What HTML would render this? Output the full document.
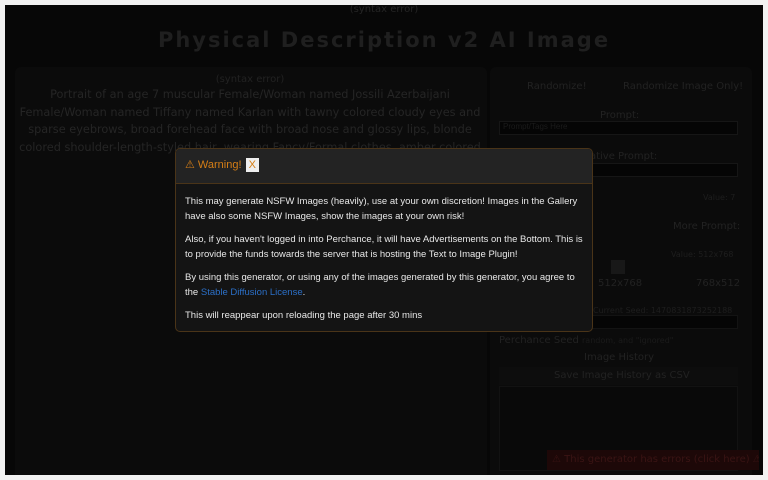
<!DOCTYPE html>
<html><head><meta charset="utf-8"><style>
*{margin:0;padding:0;box-sizing:border-box}
html,body{width:768px;height:480px;overflow:hidden}
body{background:#f2f2f2;font-family:"Liberation Sans","DejaVu Sans",sans-serif;position:relative}
.abs{position:absolute}
#page{left:5px;top:5px;width:758px;height:470px;background:#070707;overflow:hidden}
.dv{font-family:"DejaVu Sans",sans-serif;white-space:nowrap}
.c{text-align:center}
</style></head><body>
<div id="page" class="abs">
<div class="abs c dv" style="left:0;top:-1px;width:758px;font-size:10px;color:#242424">(syntax error)</div>
<div class="abs c dv" style="left:0;top:23px;width:758px;font-size:21px;font-weight:bold;letter-spacing:2px;color:#1f1f1f">Physical Description v2 AI Image</div>
<div class="abs" style="left:10px;top:62px;width:472px;height:420px;background:#0b0b0b;border-radius:6px"></div>
<div class="abs" style="left:485px;top:62px;width:262px;height:420px;background:#0b0b0b;border-radius:6px"></div>
<div class="abs c dv" style="left:10px;top:69px;width:470px;font-size:10px;color:#222">(syntax error)</div>
<div class="abs c dv" style="left:12px;top:81px;width:466px;font-size:11.3px;line-height:17.5px;color:#252525;white-space:normal">Portrait of an age 7 muscular Female/Woman named Jossili Azerbaijani Female/Woman named Tiffany named Karlan with tawny colored cloudy eyes and sparse eyebrows, broad forehead face with broad nose and glossy lips, blonde colored shoulder-length-styled hair, wearing Fancy/Formal clothes, amber colored</div>
<div class="abs dv" style="left:522px;top:76px;font-size:10px;color:#222">Randomize!</div>
<div class="abs dv" style="left:618px;top:76px;font-size:10px;color:#222">Randomize Image Only!</div>
<div class="abs dv" style="left:595px;top:105px;font-size:10px;color:#222">Prompt:</div>
<div class="abs" style="left:494px;top:116px;width:239px;height:14px;background:#050505;border:1px solid #161616;font-size:8px;color:#1b1b1b;padding-left:3px">Prompt/Tags Here</div>
<div class="abs dv" style="left:565px;top:146px;font-size:10px;color:#222">Negative Prompt:</div>
<div class="abs" style="left:494px;top:158px;width:239px;height:14px;background:#050505;border:1px solid #161616"></div>
<div class="abs dv" style="left:698px;top:188px;font-size:8px;color:#1e1e1e">Value: 7</div>
<div class="abs dv" style="left:668px;top:216px;font-size:10px;color:#222">More Prompt:</div>
<div class="abs dv" style="left:666px;top:245px;font-size:8px;color:#1e1e1e">Value: 512x768</div>
<div class="abs" style="left:606px;top:255px;width:14px;height:14px;background:#181818"></div>
<div class="abs dv" style="left:593px;top:273px;font-size:10px;color:#222">512x768</div>
<div class="abs dv" style="left:691px;top:273px;font-size:10px;color:#222">768x512</div>
<div class="abs dv" style="left:588px;top:301px;font-size:8px;color:#1e1e1e">Current Seed: 1470831873252188</div>
<div class="abs" style="left:494px;top:310px;width:239px;height:14px;background:#050505;border:1px solid #131313"></div>
<div class="abs dv" style="left:494px;top:330px;font-size:10px;color:#222">Perchance Seed</div>
<div class="abs dv" style="left:577px;top:331px;font-size:8px;color:#1b1b1b">random, and "ignored"</div>
<div class="abs dv" style="left:579px;top:347px;font-size:10px;color:#222">Image History</div>
<div class="abs" style="left:494px;top:362px;width:239px;height:18px;background:#0d0d0d"></div>
<div class="abs dv" style="left:549px;top:365px;font-size:10px;color:#222">Save Image History as CSV</div>
<div class="abs" style="left:494px;top:381px;width:239px;height:85px;background:#090909;border:1px solid #121212"></div>
<div class="abs dv" style="left:542px;top:445px;width:212px;height:20px;background:#1d0808;color:#3a1414;font-size:10px;line-height:20px;padding-left:5px;overflow:hidden">⚠ This generator has errors (click here) ⚠</div>
</div>

<div class="abs" style="left:175px;top:148px;width:418px;height:184px;background:#141414;border:1px solid #4a3418;border-radius:5px;overflow:hidden">
 <div style="height:35px;background:#232323;border-bottom:1px solid #4a3418;padding:9px 0 0 9px;font-size:11px;color:#d57e16">⚠ Warning! <span style="display:inline-block;background:#eee;color:#d57e16;padding:1px 3px;margin-left:1px">X</span></div>
 <div style="padding:10px 9px 0 9px;font-size:9.5px;line-height:15px;color:#e8e8e8">
  <p style="margin-bottom:8px">This may generate NSFW Images (heavily), use at your own discretion! Images in the Gallery have also some NSFW Images, show the images at your own risk!</p>
  <p style="margin-bottom:8px">Also, if you haven't logged in into Perchance, it will have Advertisements on the Bottom. This is to provide the funds towards the server that is hosting the Text to Image Plugin!</p>
  <p style="margin-bottom:8px">By using this generator, or using any of the images generated by this generator, you agree to the <span style="color:#2b6fc7">Stable Diffusion License</span>.</p>
  <p>This will reappear upon reloading the page after 30 mins</p>
 </div>
</div>
</body></html>
